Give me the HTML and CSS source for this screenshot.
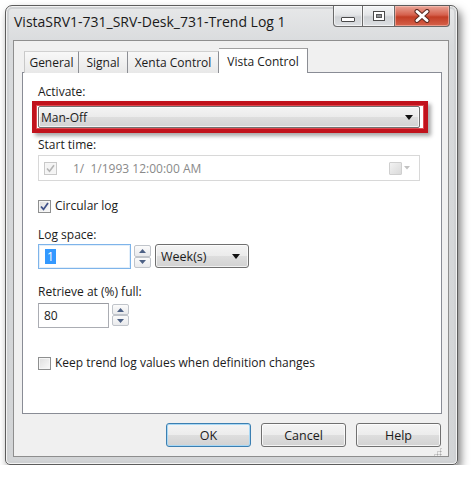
FILE: index.html
```html
<!DOCTYPE html>
<html>
<head>
<meta charset="utf-8">
<link rel="stylesheet" href="styles.css">
</head>
<body>
<div class="window">
  <div class="titlebar">
    <span class="title">VistaSRV1-731_SRV-Desk_731-Trend Log 1</span>
    <div class="caption">
      <div class="cbtn min"><span class="min-glyph"></span></div>
      <div class="cbtn max"><span class="max-glyph"></span></div>
      <div class="cbtn close">
        <svg width="18" height="14" viewBox="0 0 18 14"><path d="M4 2.5 L14 11.5 M14 2.5 L4 11.5" stroke="#5a2a22" stroke-width="5" stroke-linecap="round"/><path d="M4 2.5 L14 11.5 M14 2.5 L4 11.5" stroke="#ffffff" stroke-width="3" stroke-linecap="round"/></svg>
      </div>
    </div>
  </div>
  <div class="client">
    <div class="tabs">
      <div class="tab t-general">General</div>
      <div class="tab t-signal">Signal</div>
      <div class="tab t-xenta">Xenta Control</div>
      <div class="tab active t-vista">Vista Control</div>
    </div>
    <div class="panel">
      <div class="label l-activate">Activate:</div>
      <div class="hl">
        <div class="dd dd-wide">
          <span>Man-Off</span>
          <svg width="8" height="5" viewBox="0 0 8 5"><path d="M0 0 H8 L4 5 Z" fill="#111"/></svg>
        </div>
      </div>
      <div class="label l-start">Start time:</div>
      <div class="dt">
        <span class="cb cb-disabled"><svg width="11" height="11" viewBox="0 0 11 11"><path d="M2 5.5 L4.5 8.2 L9 2.2" stroke="#b4b4b4" stroke-width="1.6" fill="none"/></svg></span>
        <span class="dt-text">1/&nbsp; 1/1993 12:00:00 AM</span>
        <span class="cal">
          <span class="cal-box"></span>
          <svg width="6" height="4" viewBox="0 0 6 4"><path d="M0 0 H6 L3 3.5 Z" fill="#c2c2c2"/></svg>
        </span>
      </div>
      <div class="check-row r-circular">
        <span class="cb"><svg width="11" height="11" viewBox="0 0 11 11"><path d="M2 5.5 L4.5 8.4 L9 2" stroke="#3f5189" stroke-width="1.8" fill="none"/></svg></span>
        <span>Circular log</span>
      </div>
      <div class="label l-logspace">Log space:</div>
      <div class="row r-logspace">
        <div class="tb tb-focus tb-log"><span class="sel">1</span></div>
        <div class="spin spin-log">
          <div class="sp-btn"><svg width="7" height="4" viewBox="0 0 7 4"><path d="M0 4 H7 L3.5 0 Z" fill="#4d6185"/></svg></div>
          <div class="sp-btn"><svg width="7" height="4" viewBox="0 0 7 4"><path d="M0 0 H7 L3.5 4 Z" fill="#4d6185"/></svg></div>
        </div>
        <div class="dd dd-week">
          <span>Week(s)</span>
          <svg width="8" height="5" viewBox="0 0 8 5"><path d="M0 0 H8 L4 5 Z" fill="#111"/></svg>
        </div>
      </div>
      <div class="label l-retrieve">Retrieve at (%) full:</div>
      <div class="row r-retrieve">
        <div class="tb tb-ret"><span>80</span></div>
        <div class="spin spin-ret">
          <div class="sp-btn"><svg width="7" height="4" viewBox="0 0 7 4"><path d="M0 4 H7 L3.5 0 Z" fill="#4d6185"/></svg></div>
          <div class="sp-btn"><svg width="7" height="4" viewBox="0 0 7 4"><path d="M0 0 H7 L3.5 4 Z" fill="#4d6185"/></svg></div>
        </div>
      </div>
      <div class="check-row r-keep">
        <span class="cb"></span>
        <span>Keep trend log values when definition changes</span>
      </div>
    </div>
    <div class="buttons">
      <div class="btn default">OK</div>
      <div class="btn">Cancel</div>
      <div class="btn">Help</div>
    </div>
    <div class="grip-row"><span class="grip"></span></div>
  </div>
</div>
</body>
</html>
```

FILE: styles.css
```css
* { box-sizing: border-box; }

body {
  margin: 0;
  background: #ffffff;
  font-family: "Open Sans", "Noto Sans", sans-serif;
  font-size: 12px;
  color: #1b1b1b;
}

.window {
  margin: 5px 0 0 5px;
  width: 453px;
  height: 460px;
  border: 1px solid #5c5c5c;
  border-radius: 7px 7px 5px 5px;
  background: linear-gradient(#e7e8e9, #d8dadc 40px, #d2d4d6);
  padding: 0 8px 7px 7px;
  display: flex;
  flex-direction: column;
  box-shadow: 3px 5px 8px rgba(0, 0, 0, 0.5), inset 0 0 0 1px #f3f3f3, inset 0 0 0 3px #cfd1d3;
}

.titlebar {
  height: 34px;
  flex: none;
  display: flex;
  justify-content: space-between;
  align-items: flex-start;
}

.title {
  font-size: 14px;
  line-height: 20px;
  margin-top: 6px;
  padding-left: 1px;
  color: #1a1a1a;
}

.caption {
  display: flex;
  margin-right: -1px;
}

.cbtn {
  height: 21px;
  border: 1px solid #6a6a6a;
  border-top: none;
  border-left: none;
  display: flex;
  align-items: center;
  justify-content: center;
  background: linear-gradient(#f3f4f5, #e3e5e7 45%, #cfd2d5 55%, #dde0e3);
  box-shadow: inset 0 0 0 1px rgba(255, 255, 255, 0.6);
}

.cbtn.min {
  width: 30px;
  border-left: 1px solid #6a6a6a;
  border-bottom-left-radius: 4px;
}

.cbtn.max { width: 32px; }

.cbtn.close {
  width: 55px;
  border-bottom-right-radius: 4px;
  background: linear-gradient(#e9a497, #d5604c 45%, #c23d25 55%, #d6634c);
  box-shadow: inset 0 0 0 1px rgba(255, 210, 200, 0.5);
}

.min-glyph {
  width: 14px;
  height: 5px;
  margin-top: 7px;
  border: 1px solid #4a4a4a;
  border-radius: 1px;
  background: #ffffff;
}

.max-glyph {
  width: 12px;
  height: 10px;
  border: 1px solid #4a4a4a;
  background: #8e9194;
  box-shadow: inset 0 0 0 2px #ffffff, inset 0 0 0 3px #5a5a5a;
}

.client {
  flex: 1;
  background: #f0f0f0;
  border: 1px solid #8e8e8e;
  display: flex;
  flex-direction: column;
  padding: 7px 6px 0 8px;
}

.tabs {
  display: flex;
  align-items: flex-end;
  height: 25px;
  margin-left: 2px;
  margin-bottom: -1px;
  position: relative;
  z-index: 1;
}

.tab {
  height: 22px;
  border: 1px solid #8c8e94;
  border-bottom: none;
  border-left: none;
  border-top-color: #d0d0d0;
  text-align: center;
  line-height: 21px;
  font-size: 12px;
  background: linear-gradient(#f8f8f8, #f0f0f0 50%, #e8e8e8);
}

.t-general { width: 55px; border-left: 1px solid #c8c8c8; }
.t-signal { width: 49px; }
.t-xenta { width: 91px; }

.tab.active {
  width: 89px;
  height: 25px;
  background: #ffffff;
  border-top-color: #a0a0a0;
  line-height: 25px;
}

.panel {
  flex: none;
  width: 420px;
  height: 342px;
  border: 1px solid #898c95;
  background: #ffffff;
  padding: 11px 0 0 15px;
  display: flex;
  flex-direction: column;
  align-items: flex-start;
}

.label {
  line-height: 16px;
  height: 16px;
}

.hl {
  margin: 1px 0 0 -6px;
  border: 4px solid #c1121c;
  padding: 1px 4px 1px 2px;
  box-shadow: 3px 3px 4px rgba(0, 0, 0, 0.35), inset 0 0 0 1px #e04a50;
}

.dd {
  height: 22px;
  border: 1px solid #707070;
  border-radius: 2px;
  background: linear-gradient(#f4f4f4, #ebebeb 50%, #dedede 50%, #d2d2d2);
  display: flex;
  align-items: center;
  justify-content: space-between;
  box-shadow: inset 0 0 0 1px rgba(255, 255, 255, 0.7);
}

.dd-wide {
  width: 382px;
  padding: 0 6px 0 2px;
}

.l-start { margin-top: 4px; }

.dt {
  margin-top: 2px;
  width: 382px;
  height: 26px;
  border: 1px solid #d8d8d8;
  background: #ffffff;
  display: flex;
  align-items: center;
  padding: 0 9px 0 5px;
  color: #8a8a8a;
}

.dt-text {
  margin-left: 16px;
  flex: 1;
}

.cal {
  display: flex;
  align-items: center;
  gap: 2px;
}

.cal-box {
  width: 13px;
  height: 13px;
  border: 1px solid #cfcfcf;
  border-radius: 1px;
  background: linear-gradient(135deg, #f2f2f2, #dadada);
}

.cb {
  width: 13px;
  height: 13px;
  flex: none;
  border: 1px solid #8e8f8f;
  background: linear-gradient(135deg, #dedede, #fafafa);
  display: flex;
  align-items: center;
  justify-content: center;
  box-shadow: inset 0 0 0 1px #f6f6f6;
}

.cb-disabled {
  border-color: #c9c9c9;
  background: #f4f4f4;
}

.check-row {
  display: flex;
  align-items: center;
  gap: 4px;
  height: 16px;
  line-height: 16px;
}

.r-circular { margin-top: 17px; }
.l-logspace { margin-top: 13px; }

.row {
  display: flex;
  align-items: flex-start;
}

.r-logspace { margin-top: 1px; }

.tb {
  height: 25px;
  border: 1px solid #abadb3;
  border-top-color: #9a9ca2;
  background: #ffffff;
  display: flex;
  align-items: center;
  padding-left: 5px;
}

.tb-focus {
  border-color: #7eb4ea;
  box-shadow: inset 0 0 0 1px #e3effa;
}

.tb-log { width: 93px; padding-left: 6px; }
.tb-ret { width: 71px; }

.sel {
  background: #3399ff;
  color: #ffffff;
  padding: 0 2px;
  line-height: 15px;
}

.spin {
  display: flex;
  flex-direction: column;
  width: 17px;
  margin-left: 3px;
  margin-top: 1px;
}

.sp-btn {
  height: 11.5px;
  border: 1px solid #c0c4ca;
  border-radius: 2px;
  background: linear-gradient(#fbfbfb, #e9eaec);
  display: flex;
  align-items: center;
  justify-content: center;
}

.spin-ret { margin-left: 3px; }
.spin-ret .sp-btn { height: 11px; }

.dd-week {
  width: 94px;
  height: 24px;
  margin-left: 4px;
  border-radius: 3px;
  padding: 0 8px 0 5px;
  font-size: 12.5px;
}

.l-retrieve { margin-top: 15px; }
.r-retrieve { margin-top: 3px; }
.r-keep { margin-top: 27px; }

.buttons {
  margin-top: 9px;
  display: flex;
  justify-content: flex-end;
  gap: 10px;
  padding-right: 1px;
}

.btn {
  width: 85px;
  height: 24px;
  border: 1px solid #707070;
  border-radius: 3px;
  background: linear-gradient(#f4f4f4, #ececec 50%, #dedede 50%, #d2d2d2);
  box-shadow: inset 0 0 0 1px rgba(255, 255, 255, 0.75);
  display: flex;
  align-items: center;
  justify-content: center;
  font-size: 12.5px;
}

.btn.default {
  border-color: #3c7fb1;
  box-shadow: inset 0 0 0 1px #a8d8f5;
}

.grip-row {
  display: flex;
  justify-content: flex-end;
  padding-right: 0;
}

.grip {
  width: 9px;
  height: 9px;
  background:
    radial-gradient(circle, #a8a8a8 0.8px, transparent 1.2px) 0 0 / 3px 3px;
  clip-path: polygon(100% 0, 100% 100%, 0 100%);
}
```
